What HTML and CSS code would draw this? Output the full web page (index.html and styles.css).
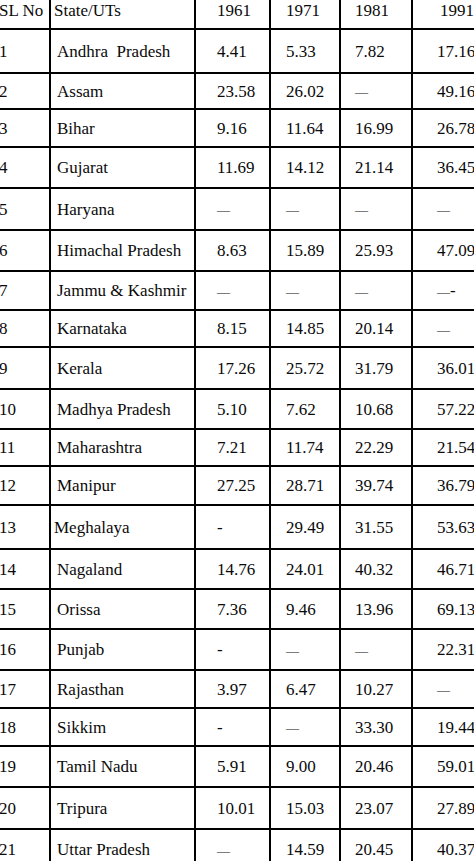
FILE: index.html
```html
<!DOCTYPE html>
<html>
<head>
<meta charset="utf-8">
<link rel="stylesheet" href="styles.css">
</head>
<body>
<div class="page">
<table class="grid">
  <colgroup>
    <col class="c-sl"><col class="c-state"><col class="c-yr3"><col class="c-yr4"><col class="c-yr5"><col class="c-yr6">
  </colgroup>
  <thead>
    <tr><th>SL No</th><th>State/UTs</th><th>1961</th><th>1971</th><th>1981</th><th>1991</th></tr>
  </thead>
  <tbody>
    <tr><td>1</td><td>Andhra&nbsp; Pradesh</td><td>4.41</td><td>5.33</td><td>7.82</td><td>17.16</td></tr>
    <tr><td>2</td><td>Assam</td><td>23.58</td><td>26.02</td><td><span class="dash">—</span></td><td>49.16</td></tr>
    <tr><td>3</td><td>Bihar</td><td>9.16</td><td>11.64</td><td>16.99</td><td>26.78</td></tr>
    <tr><td>4</td><td>Gujarat</td><td>11.69</td><td>14.12</td><td>21.14</td><td>36.45</td></tr>
    <tr><td>5</td><td>Haryana</td><td><span class="dash">—</span></td><td><span class="dash">—</span></td><td><span class="dash">—</span></td><td><span class="dash">—</span></td></tr>
    <tr><td>6</td><td>Himachal Pradesh</td><td>8.63</td><td>15.89</td><td>25.93</td><td>47.09</td></tr>
    <tr><td>7</td><td>Jammu &amp; Kashmir</td><td><span class="dash">—</span></td><td><span class="dash">—</span></td><td><span class="dash">—</span></td><td><span class="dash">—</span>-</td></tr>
    <tr><td>8</td><td>Karnataka</td><td>8.15</td><td>14.85</td><td>20.14</td><td><span class="dash">—</span></td></tr>
    <tr><td>9</td><td>Kerala</td><td>17.26</td><td>25.72</td><td>31.79</td><td>36.01</td></tr>
    <tr><td>10</td><td>Madhya Pradesh</td><td>5.10</td><td>7.62</td><td>10.68</td><td>57.22</td></tr>
    <tr><td>11</td><td>Maharashtra</td><td>7.21</td><td>11.74</td><td>22.29</td><td>21.54</td></tr>
    <tr><td>12</td><td>Manipur</td><td>27.25</td><td>28.71</td><td>39.74</td><td>36.79</td></tr>
    <tr><td>13</td><td class="tight">Meghalaya</td><td>-</td><td>29.49</td><td>31.55</td><td>53.63</td></tr>
    <tr><td>14</td><td>Nagaland</td><td>14.76</td><td>24.01</td><td>40.32</td><td>46.71</td></tr>
    <tr><td>15</td><td>Orissa</td><td>7.36</td><td>9.46</td><td>13.96</td><td>69.13</td></tr>
    <tr><td>16</td><td>Punjab</td><td>-</td><td><span class="dash">—</span></td><td><span class="dash">—</span></td><td>22.31</td></tr>
    <tr><td>17</td><td>Rajasthan</td><td>3.97</td><td>6.47</td><td>10.27</td><td><span class="dash">—</span></td></tr>
    <tr><td>18</td><td>Sikkim</td><td>-</td><td><span class="dash">—</span></td><td>33.30</td><td>19.44</td></tr>
    <tr><td>19</td><td>Tamil Nadu</td><td>5.91</td><td>9.00</td><td>20.46</td><td>59.01</td></tr>
    <tr><td>20</td><td>Tripura</td><td>10.01</td><td>15.03</td><td>23.07</td><td>27.89</td></tr>
    <tr><td>21</td><td>Uttar Pradesh</td><td><span class="dash">—</span></td><td>14.59</td><td>20.45</td><td>40.37</td></tr>
  </tbody>
</table>
</div>
</body>
</html>
```

FILE: styles.css
```css
html, body {
  margin: 0;
  padding: 0;
  background: #fff;
  overflow: hidden;
}

.page {
  width: 474px;
  height: 861px;
  overflow: hidden;
}

.grid {
  margin-left: -1px;
  border-collapse: collapse;
  table-layout: fixed;
  width: 513px;
  font-family: "Liberation Serif", "Times New Roman", serif;
  font-size: 17px;
  line-height: 19px;
  color: #0a0a0a;
}

.c-sl { width: 51px; }
.c-state { width: 145px; }
.c-yr3 { width: 75px; }
.c-yr4 { width: 70px; }
.c-yr5 { width: 72px; }
.c-yr6 { width: 100px; }

.grid th,
.grid td {
  font-weight: normal;
  text-align: left;
  white-space: nowrap;
  padding: 0;
  border-right: 2px solid #000;
  border-bottom: 2px solid #000;
  vertical-align: middle;
}

.grid th:last-child,
.grid td:last-child {
  border-right: none;
}

.grid tbody tr:last-child td {
  border-bottom: none;
}

.grid th {
  vertical-align: top;
  padding-top: 1px;
}

.grid th:nth-child(1) { padding-left: 0; }
.grid th:nth-child(2) { padding-left: 3px; }
.grid th:nth-child(3) { padding-left: 21px; }
.grid th:nth-child(4) { padding-left: 15px; }
.grid th:nth-child(5) { padding-left: 14px; }
.grid th:nth-child(6) { padding-left: 27px; }

.grid td:nth-child(1) { padding-left: 0; }
.grid td:nth-child(2) { padding-left: 6px; }
.grid td:nth-child(3) { padding-left: 21px; }
.grid td:nth-child(4) { padding-left: 15px; }
.grid td:nth-child(5) { padding-left: 14px; }
.grid td:nth-child(6) { padding-left: 24px; }

.grid td.tight { padding-left: 3px; }

.dash {
  font-size: 13px;
}

.grid thead tr { height: 29px; }
.grid tbody tr:nth-child(1) { height: 44px; }
.grid tbody tr:nth-child(2) { height: 36px; }
.grid tbody tr:nth-child(3) { height: 38px; }
.grid tbody tr:nth-child(4) { height: 41px; }
.grid tbody tr:nth-child(5) { height: 42px; }
.grid tbody tr:nth-child(6) { height: 41px; }
.grid tbody tr:nth-child(7) { height: 39px; }
.grid tbody tr:nth-child(8) { height: 37px; }
.grid tbody tr:nth-child(9) { height: 42px; }
.grid tbody tr:nth-child(10) { height: 40px; }
.grid tbody tr:nth-child(11) { height: 37px; }
.grid tbody tr:nth-child(12) { height: 39px; }
.grid tbody tr:nth-child(13) { height: 44px; }
.grid tbody tr:nth-child(14) { height: 40px; }
.grid tbody tr:nth-child(15) { height: 40px; }
.grid tbody tr:nth-child(16) { height: 41px; }
.grid tbody tr:nth-child(17) { height: 38px; }
.grid tbody tr:nth-child(18) { height: 38px; }
.grid tbody tr:nth-child(19) { height: 41px; }
.grid tbody tr:nth-child(20) { height: 42px; }
.grid tbody tr:nth-child(21) { height: 40px; }
```
